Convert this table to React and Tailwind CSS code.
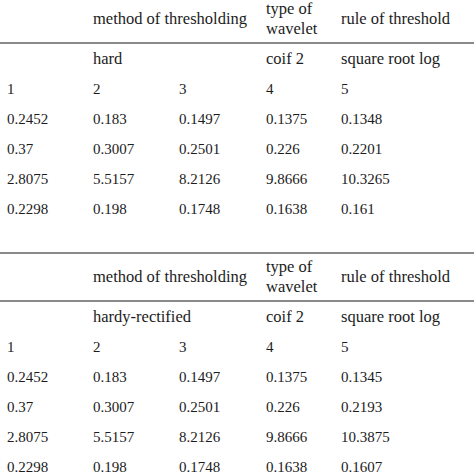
import React from "react";

const F = "font-['Liberation_Serif','Times_New_Roman',serif]";
const GRID = "grid grid-cols-[93px_86px_87px_75px_1fr] items-center";

function Cell({ className = "", children }) {
  return <div className={`${F} ${className}`}>{children}</div>;
}

function Header() {
  return (
    <div className={`${GRID} h-[50px] border-y-2 border-[#8a8a8a] text-[16.5px] leading-[20px]`}>
      <div />
      <Cell className="col-span-2 whitespace-nowrap">method of thresholding</Cell>
      <Cell>
        type of
        <br />
        wavelet
      </Cell>
      <Cell className="whitespace-nowrap">rule of threshold</Cell>
    </div>
  );
}

function LabelRow({ method }) {
  return (
    <div className={`${GRID} h-[30px] text-[16.5px]`}>
      <div />
      <Cell className="col-span-2 whitespace-nowrap">{method}</Cell>
      <Cell className="whitespace-nowrap">coif 2</Cell>
      <Cell className="whitespace-nowrap">square root log</Cell>
    </div>
  );
}

function Row({ cells }) {
  return (
    <div className={`${GRID} h-[30px] text-[15px]`}>
      {cells.map((c, i) => (
        <Cell key={i} className={i === 0 ? "pl-[7px]" : ""}>
          {c}
        </Cell>
      ))}
    </div>
  );
}

function Table({ method, data, className }) {
  return (
    <div className={className}>
      <Header />
      <LabelRow method={method} />
      <Row cells={["1", "2", "3", "4", "5"]} />
      {data.map((r, i) => (
        <Row key={i} cells={r} />
      ))}
    </div>
  );
}

export default function App() {
  const d1 = [
    ["0.2452", "0.183", "0.1497", "0.1375", "0.1348"],
    ["0.37", "0.3007", "0.2501", "0.226", "0.2201"],
    ["2.8075", "5.5157", "8.2126", "9.8666", "10.3265"],
    ["0.2298", "0.198", "0.1748", "0.1638", "0.161"],
  ];
  const d2 = [
    ["0.2452", "0.183", "0.1497", "0.1375", "0.1345"],
    ["0.37", "0.3007", "0.2501", "0.226", "0.2193"],
    ["2.8075", "5.5157", "8.2126", "9.8666", "10.3875"],
    ["0.2298", "0.198", "0.1748", "0.1638", "0.1607"],
  ];
  return (
    <div className={`w-[474px] h-[474px] overflow-hidden bg-white text-[#1c1c1c] ${F}`}>
      <Table method="hard" data={d1} className="mt-[-6px]" />
      <Table method="hardy-rectified" data={d2} className="mt-[28px]" />
    </div>
  );
}
